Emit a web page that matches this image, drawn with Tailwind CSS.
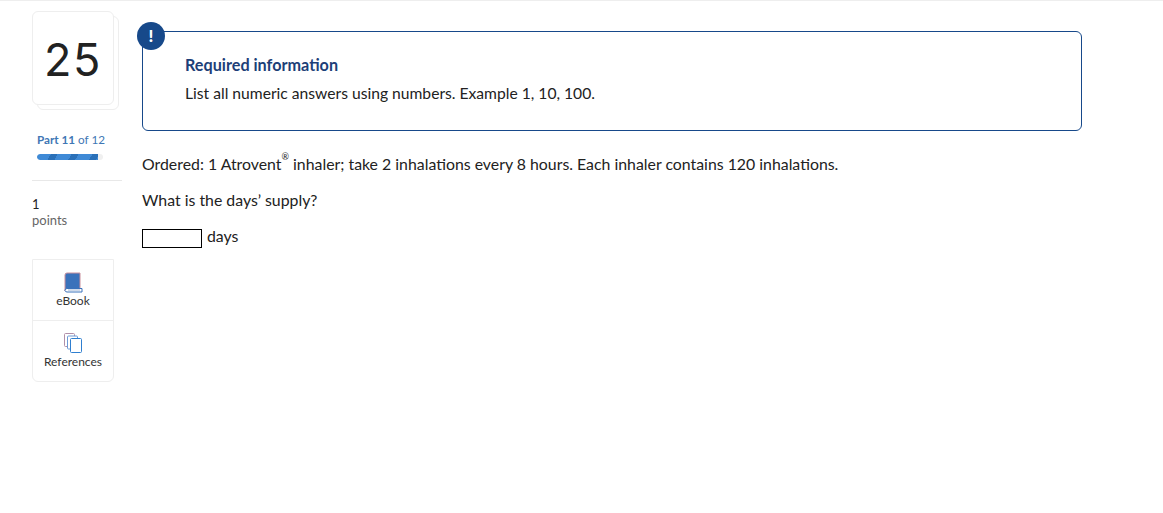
<!DOCTYPE html>
<html lang="en">
<head>
  <meta charset="UTF-8" />
  <title>Question 25</title>
  <script src="https://cdn.jsdelivr.net/npm/@tailwindcss/browser@4"></script>
</head>
<body class="bg-white h-[513px] overflow-hidden font-['Lato','Liberation_Sans',sans-serif] text-[#222]">
  <div class="border-t border-[#eee] flex pl-[32px]">

    <!-- Left column -->
    <aside class="w-[90px] shrink-0 pt-[10px]">
      <div class="relative w-[82px] h-[94px]">
        <div class="absolute left-[5px] top-[5px] w-[82px] h-[94px] rounded-[6px] border border-[#eee] bg-white"></div>
        <div class="absolute inset-0 rounded-[6px] border border-[#eee] bg-white flex items-center justify-center font-['Inter',sans-serif] font-normal text-[45px] tracking-[1.500px] leading-none pt-[2px]">25</div>
      </div>
      <div class="mt-[26px] pl-[5px] text-[11.700px] leading-[16px] text-[#3f77b5] whitespace-nowrap"><b class="font-bold">Part 11</b> of 12</div>
      <div class="ml-[5px] mt-[7px] w-[66px] h-[6px] rounded-full bg-[#f0f0f0] overflow-hidden">
        <div class="h-full w-[61px] rounded-l-full bg-[repeating-linear-gradient(120deg,#3f8ad6_0,#3f8ad6_12px,#2a70b8_12px,#2a70b8_18px)]"></div>
      </div>
      <div class="mt-[20px] border-t border-[#e8e8e8] pt-[15px]">
        <div class="text-[13px] leading-[16px] text-[#222]">1</div>
        <div class="text-[13px] leading-[16px] text-[#666]">points</div>
      </div>
      <div class="mt-[31px] w-[82px] h-[123px] rounded-b-[6px] border border-[#eee] flex flex-col text-[12px] text-[#333]">
        <div class="h-[61px] border-b border-[#eee] flex flex-col items-center pt-[12px]">
          <svg width="19" height="21" viewBox="0 0 19 21">
            <path d="M1 18V3a2 2 0 0 1 2-2h13v16H3a2 2 0 0 0-2 2z" fill="#3a72bb" stroke="#c98f9c" stroke-width="1"/>
            <path d="M1 18.500a2 2 0 0 1 2-2h15v3.500H3a2 2 0 0 1-2-1.500z" fill="#fff" stroke="#3a72bb" stroke-width="1"/>
            <path d="M4 18h12" stroke="#9fb6d6" stroke-width="1"/>
          </svg>
          <span class="leading-[14px] mt-[1px]">eBook</span>
        </div>
        <div class="flex flex-col items-center pt-[12px]">
          <svg width="19" height="20" viewBox="0 0 19 20" fill="#fff">
            <rect x="0.500" y="0.500" width="10" height="13" rx="1" stroke="#b08fa8"/>
            <rect x="3.500" y="3" width="10" height="13" rx="1" stroke="#6d9ad6"/>
            <rect x="6.500" y="5.500" width="11" height="14" rx="1" stroke="#2f7fd0"/>
          </svg>
          <span class="leading-[14px] mt-[2px]">References</span>
        </div>
      </div>
    </aside>

    <!-- Question -->
    <main class="ml-[20px] w-[940px] pt-[30px]">
      <section class="relative h-[100px] rounded-[6px] border border-[#17498a] pl-[42px] pt-[23px]">
        <div class="absolute -left-[6px] -top-[10px] w-[28px] h-[28px] rounded-full bg-[#17498a] text-white text-[17px] font-black leading-[28px] text-center">!</div>
        <h2 class="text-[16.200px] leading-[20px] font-bold text-[#1d3f78]">Required information</h2>
        <p class="mt-[8px] text-[15.650px] leading-[20px]">List all numeric answers using numbers. Example 1, 10, 100.</p>
      </section>
      <p class="mt-[23px] text-[15.850px] leading-[20px] whitespace-nowrap">Ordered: 1 Atrovent<sup class="text-[9px] leading-none -top-[10px] relative align-baseline">®</sup> inhaler; take 2 inhalations every 8 hours. Each inhaler contains 120 inhalations.</p>
      <p class="mt-[16px] text-[15.850px] leading-[20px]">What is the days’ supply?</p>
      <div class="mt-[19px] flex items-start gap-[5px] text-[15.850px] leading-[20px]">
        <input type="text" aria-label="days" class="w-[60px] h-[19px] border border-black bg-white" />
        <span class="-mt-[3px]">days</span>
      </div>
    </main>
  </div>
</body>
</html>
